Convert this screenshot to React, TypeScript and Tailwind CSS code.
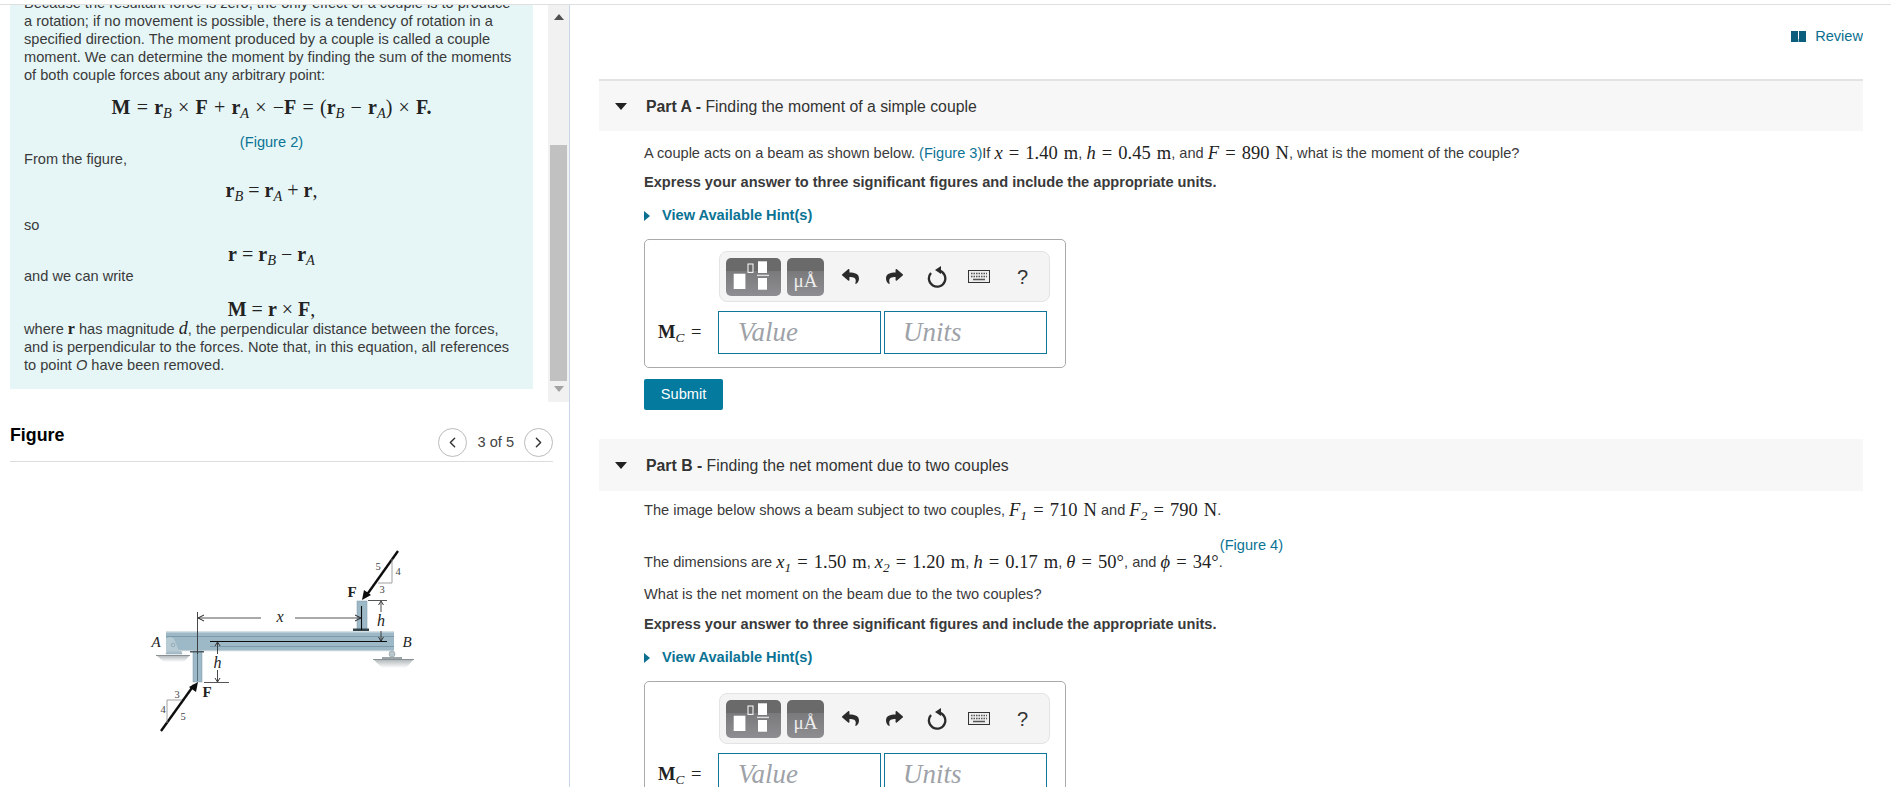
import React from 'react';
import { ChevronLeft, ChevronRight } from 'lucide-react';
import { FaReply, FaShare } from 'react-icons/fa';

const Eq: React.FC<{ className?: string; children: React.ReactNode }> = ({ className = '', children }) => (
  <span className={`font-['Liberation_Serif',serif] text-[#222] whitespace-nowrap ${className}`}>{children}</span>
);

const B: React.FC<{ children: React.ReactNode }> = ({ children }) => <b className="font-bold">{children}</b>;

const Sub: React.FC<{ children: React.ReactNode }> = ({ children }) => (
  <sub className="static text-[0.72em] italic align-[-0.28em] leading-none">{children}</sub>
);

const I: React.FC<{ children: React.ReactNode }> = ({ children }) => <i className="italic">{children}</i>;

// inline math in the question text
const Inline: React.FC<{ children: React.ReactNode }> = ({ children }) => (
  <Eq className="text-[18.5px] [word-spacing:1.5px]">{children}</Eq>
);

const Triangle: React.FC<{ open?: boolean; className?: string }> = ({ open, className = '' }) =>
  open ? (
    <svg width="12" height="7" viewBox="0 0 12 7" className={className}>
      <path d="M0 0h12L6 7z" fill="#222" />
    </svg>
  ) : (
    <svg width="6" height="10" viewBox="0 0 6 10" className={className}>
      <path d="M0 0l6 5-6 5z" fill="#0b6f8f" />
    </svg>
  );

const Toolbar: React.FC = () => (
  <div className="ml-[74px] w-[331px] h-[51px] bg-[#f4f4f4] border border-[#e3e3e3] rounded-lg flex items-center pl-[6px] text-[#2b2b2b]">
    <div className="w-[55px] h-[38px] rounded-[5px] bg-[linear-gradient(#6a6a6a_0,#6a6a6a_35%,#7a7a7c_35%,#8e8e92_100%)]">
      <svg width="55" height="38" viewBox="0 0 55 38">
        <g fill="#fff">
          <rect x="7.7" y="15.7" width="11.7" height="15.3" />
          <rect x="32" y="3.3" width="9" height="11.7" />
          <rect x="31" y="16.7" width="12" height="1.4" fill="#ddd" />
          <rect x="32" y="20" width="9" height="11.7" />
        </g>
        <rect x="22" y="6" width="5" height="8.4" fill="none" stroke="#fff" />
      </svg>
    </div>
    <div className="ml-[6px] w-[37px] h-[38px] rounded-[5px] bg-[linear-gradient(#6a6a6a_0,#6a6a6a_35%,#7a7a7c_35%,#8e8e92_100%)] flex items-end justify-center pb-[5px] font-['Liberation_Serif',serif] text-[19px] leading-[20px] text-[#eee]">
      μÅ
    </div>
    <FaReply className="ml-[18px] w-[17px] h-[17px]" />
    <FaShare className="ml-[27px] w-[17px] h-[17px]" />
    <svg width="22" height="22" viewBox="0 0 22 22" className="ml-[23px]">
      <path d="M5 7A8.2 8.2 0 1 0 12.5 4.4" fill="none" stroke="#2b2b2b" strokeWidth="2.3" />
      <path d="M9 4l6-4v8z" fill="#2b2b2b" />
    </svg>
    <svg width="22" height="13" viewBox="0 0 22 13" className="ml-[20px]">
      <rect x="0.5" y="0.5" width="21" height="12" fill="#eee" stroke="#333" />
      <path d="M3 3.5h16M3 6.5h16" stroke="#555" strokeWidth="1.5" strokeDasharray="1.5 1" />
      <path d="M5 9.5h12" stroke="#555" strokeWidth="1.5" />
    </svg>
    <span className="ml-[27px] font-['Liberation_Sans',sans-serif] text-[20px] text-[#333]">?</span>
  </div>
);

const AnswerBox: React.FC = () => (
  <div className="mt-[13px] ml-[45px] w-[422px] h-[129px] border border-[#aaa] rounded-[5px] pt-[11px] shrink-0">
    <Toolbar />
    <div className="mt-[9px] flex items-center h-[43px]">
      <Eq className="ml-[13px] w-[60px] text-[18.5px] [word-spacing:2px]">
        <B>M</B>
        <Sub>C</Sub> =
      </Eq>
      <input
        readOnly
        placeholder="Value"
        className="w-[163px] h-[43px] border border-[#12769a] pl-[19px] font-['Liberation_Serif',serif] italic text-[27px] placeholder:text-[#9ea2a8] outline-none"
      />
      <input
        readOnly
        placeholder="Units"
        className="ml-[3px] w-[163px] h-[43px] border border-[#12769a] pl-[18px] font-['Liberation_Serif',serif] italic text-[27px] placeholder:text-[#9ea2a8] outline-none"
      />
    </div>
  </div>
);

const PartHeader: React.FC<{ part: string; title: string; className?: string }> = ({ part, title, className = '' }) => (
  <div className={`flex items-center bg-[#f7f7f7] shrink-0 ${className}`}>
    <Triangle open className="ml-[16px]" />
    <div className="ml-[19px] pt-[2px] text-[15.8px] text-[#333]">
      <span className="font-bold">Part {part} - </span>
      {title}
    </div>
  </div>
);

const Hint: React.FC<{ className?: string }> = ({ className = '' }) => (
  <div className={`ml-[45px] flex items-center h-[20px] font-bold text-[#0b7394] ${className}`}>
    <Triangle />
    <span className="ml-[12px]">View Available Hint(s)</span>
  </div>
);

// the beam drawing from the figure panel
const BeamFigure: React.FC = () => (
  <svg width="320" height="200" viewBox="0 0 320 200" className="ml-[120px] mt-[78px] shrink-0">
    <defs>
      <filter id="soft">
        <feGaussianBlur stdDeviation="0.4" />
      </filter>
      <linearGradient id="shade" x1="0" y1="0" x2="0" y2="1">
        <stop offset="0" stopColor="#aab2b4" />
        <stop offset="1" stopColor="#fff" />
      </linearGradient>
    </defs>
    <g filter="url(#soft)">
      <path d="M36 115h34l-6 7H44z" fill="url(#shade)" />
      <path d="M253 119h41l-8 9h-24z" fill="url(#shade)" />
      <path d="M46 114l4-12q0-3 3-3h2q3 0 3 3l4 12z" fill="#a9c0cb" stroke="#8ba3af" strokeWidth="0.5" />
      <rect x="46" y="91" width="228" height="20" fill="#9db8c6" />
      <rect x="46" y="91" width="228" height="1.5" fill="#d5e0e5" />
      <rect x="46" y="96" width="228" height="1" fill="#7d98a6" />
      <rect x="90" y="106" width="184" height="1" fill="#7d98a6" />
      <rect x="46" y="110" width="228" height="1.2" fill="#c3d0d6" />
      <path d="M46 99q4-4 8 0l5 12H46z" fill="#b7cbd4" />
      <circle cx="53" cy="105" r="1.8" fill="none" stroke="#7d98a6" strokeWidth="0.6" />
      <circle cx="272" cy="114" r="3" fill="#b9c6cc" stroke="#7f8f97" strokeWidth="0.5" />
      <rect x="262" y="117" width="20" height="2" fill="#9aa5aa" />
      <path d="M253 119.5h41M36 115.5h34" stroke="#7e8689" strokeWidth="0.8" />

      <rect x="237" y="61" width="10" height="29" fill="#9db8c6" stroke="#7d98a6" strokeWidth="0.5" />
      <rect x="233" y="88.5" width="16" height="2.5" fill="#33424a" />
      <rect x="73" y="111" width="9" height="31" fill="#9db8c6" stroke="#7d98a6" strokeWidth="0.5" />
      <rect x="70" y="111" width="14" height="1.5" fill="#4a5a62" />
      <path d="M77.5 113v28" stroke="#56707d" strokeWidth="1" />

      <path d="M241.5 66v24" stroke="#111" strokeWidth="1.1" />
      <path d="M77.5 72v42" stroke="#333" strokeWidth="0.9" />
      <path d="M90 101.5h177" stroke="#111" strokeWidth="1.1" />
      <path d="M248 60.5h19M84 142.5h25" stroke="#555" strokeWidth="1" />

      <path d="M79 78h62M175 78h65" stroke="#555" strokeWidth="1" />
      <path d="M84 75l-6 3 6 3M235 75l6 3-6 3" fill="none" stroke="#222" strokeWidth="1" />
      <path d="M261 62v10M261 91v10M97.5 103v11M97.5 130v11" stroke="#333" strokeWidth="0.9" />
      <path d="M258.5 65l2.5-4 2.5 4M258.5 97l2.5 4 2.5-4M95 106l2.5-4 2.5 4M95 138l2.5 4 2.5-4" fill="none" stroke="#222" strokeWidth="0.9" />

      <path d="M278 11L246 56" stroke="#111" strokeWidth="2.4" />
      <path d="M242 60l2-10 7 5z" fill="#111" />
      <path d="M41 191l33-46" stroke="#111" strokeWidth="2.4" />
      <path d="M78 142l-2 10-7-5z" fill="#111" />
      <path d="M272 19v24h-14" fill="none" stroke="#888" strokeWidth="0.8" />
      <path d="M47 183v-23h15" fill="none" stroke="#888" strokeWidth="0.8" />
    </g>
    <g fontFamily="'Liberation Serif', serif" fill="#222" textAnchor="middle">
      <text x="232" y="57" fontSize="15" fontWeight="bold">F</text>
      <text x="87" y="157" fontSize="15" fontWeight="bold">F</text>
      <text x="36" y="107" fontSize="15" fontStyle="italic">A</text>
      <text x="287" y="107" fontSize="15" fontStyle="italic">B</text>
      <text x="160" y="82" fontSize="16" fontStyle="italic">x</text>
      <text x="261" y="86" fontSize="16" fontStyle="italic">h</text>
      <text x="97.5" y="128" fontSize="16" fontStyle="italic">h</text>
      <g fontSize="10.5" fill="#444">
        <text x="258" y="30">5</text>
        <text x="278" y="35">4</text>
        <text x="262" y="53">3</text>
        <text x="57" y="158">3</text>
        <text x="43" y="173">4</text>
        <text x="63" y="180">5</text>
      </g>
    </g>
  </svg>
);

const LeftPane: React.FC = () => (
  <div className="w-[570px] shrink-0 border-r border-[#c9d6e6] flex flex-col">
    <div className="h-[397px] flex shrink-0">
      <div className="ml-[10px] w-[523px] h-[384px] bg-[#e6f6f7] overflow-hidden shrink-0 text-[14.6px] leading-[18px] text-[#3a3a3a] px-[14px]">
        <div className="-mt-[11px]">
          <p>
            Because the resultant force is zero, the only effect of a couple is to produce a rotation; if no movement
            is possible, there is a tendency of rotation in a specified direction. The moment produced by a couple is
            called a couple moment. We can determine the moment by finding the sum of the moments of both couple forces
            about any arbitrary point:
          </p>
          <div className="h-[48px] pt-[3px] flex items-center justify-center">
            <Eq className="text-[20px] [word-spacing:1.2px]">
              <B>M</B> = <B>r</B>
              <Sub>B</Sub> × <B>F</B> + <B>r</B>
              <Sub>A</Sub> × −<B>F</B> = (<B>r</B>
              <Sub>B</Sub> − <B>r</B>
              <Sub>A</Sub>) × <B>F.</B>
            </Eq>
          </div>
          <div className="mt-px -mb-px text-center text-[#0b7394]">(Figure 2)</div>
          <p>From the figure,</p>
          <div className="h-[48px] flex items-center justify-center">
            <Eq className="text-[20px]">
              <B>r</B>
              <Sub>B</Sub> = <B>r</B>
              <Sub>A</Sub> + <B>r</B>,
            </Eq>
          </div>
          <p>so</p>
          <div className="h-[33px] flex items-end justify-center">
            <Eq className="text-[20px] leading-[18px]">
              <B>r</B> = <B>r</B>
              <Sub>B</Sub> − <B>r</B>
              <Sub>A</Sub>
            </Eq>
          </div>
          <p>and we can write</p>
          <div className="h-[34px] flex items-end justify-center">
            <Eq className="text-[20px] leading-[20px]">
              <B>M</B> = <B>r</B> × <B>F</B>,
            </Eq>
          </div>
          <p>
            where <Eq className="text-[16px]"><B>r</B></Eq> has magnitude <Eq className="text-[18px]"><I>d</I></Eq>, the
            perpendicular distance between the forces, and is perpendicular to the forces. Note that, in this equation,
            all references to point <i>O</i> have been removed.
          </p>
        </div>
      </div>
      <div className="ml-[15px] w-[21px] bg-[#f1f1f1] flex flex-col items-center">
        <svg width="10" height="6" viewBox="0 0 10 6" className="mt-[9px]">
          <path d="M0 6l5-6 5 6z" fill="#505050" />
        </svg>
        <div className="mt-[125px] w-[17px] h-[236px] bg-[#c1c1c1]" />
        <svg width="10" height="6" viewBox="0 0 10 6" className="mt-[5px]">
          <path d="M0 0l5 6 5-6z" fill="#a3a3a3" />
        </svg>
      </div>
    </div>
    <div className="ml-[10px] w-[543px] h-[60px] border-b border-[#ddd] flex items-start shrink-0">
      <div className="mt-[23px] text-[17.8px] font-bold text-black leading-[20px]">Figure</div>
      <div className="ml-auto mt-[26px] flex items-center text-[14.6px] text-[#444]">
        <span className="w-[29px] h-[29px] rounded-full border border-[#bbb] flex items-center justify-center">
          <ChevronLeft className="w-[17px] h-[17px] text-[#333]" />
        </span>
        <span className="mx-[10px]">3 of 5</span>
        <span className="w-[29px] h-[29px] rounded-full border border-[#bbb] flex items-center justify-center">
          <ChevronRight className="w-[17px] h-[17px] text-[#333]" />
        </span>
      </div>
    </div>
    <BeamFigure />
  </div>
);

const RightPane: React.FC = () => (
  <div className="ml-[29px] w-[1264px] flex flex-col text-[14.6px] text-[#3a3a3a] overflow-hidden">
    <div className="h-[76px] shrink-0 border-b-2 border-[#e3e3e3] flex items-start justify-end">
      <div className="mt-[21px] flex items-center text-[#0b6f8f] leading-[20px]">
        <svg width="15" height="11" viewBox="0 0 15 11" className="mr-[9px]">
          <path d="M0 0h7v11H0zM8 0h7v11H8z" fill="#0b5f7c" />
          <path d="M7 8h1v3H7z" fill="#8fb4c3" />
        </svg>
        Review
      </div>
    </div>

    <PartHeader part="A" title="Finding the moment of a simple couple" className="h-[50px]" />
    <div className="mt-[13px] ml-[45px] h-[20px] flex items-center whitespace-pre">
      A couple acts on a beam as shown below. <span className="text-[#0b7394]">(Figure 3)</span>If{' '}
      <Inline>
        <I>x</I> = 1.40 m
      </Inline>
      ,{' '}
      <Inline>
        <I>h</I> = 0.45 m
      </Inline>
      , and{' '}
      <Inline>
        <I>F</I> = 890 N
      </Inline>
      , what is the moment of the couple?
    </div>
    <div className="mt-[8px] ml-[45px] h-[20px] font-bold">
      Express your answer to three significant figures and include the appropriate units.
    </div>
    <Hint className="mt-[14px]" />
    <AnswerBox />
    <button className="mt-[11px] ml-[45px] w-[79px] h-[31px] shrink-0 bg-[#047a9f] rounded-[2px] text-white">
      Submit
    </button>

    <PartHeader part="B" title="Finding the net moment due to two couples" className="h-[52px] mt-[29px]" />
    <div className="mt-[10px] ml-[45px] h-[20px] flex items-center whitespace-pre shrink-0">
      The image below shows a beam subject to two couples,{' '}
      <Inline>
        <I>F</I>
        <Sub>1</Sub> = 710 N
      </Inline>
      <span className="ml-[4px]">and </span>
      <Inline>
        <I>F</I>
        <Sub>2</Sub> = 790 N
      </Inline>
      .
    </div>
    <div className="mt-[14px] ml-[45px] h-[38px] flex shrink-0 whitespace-pre">
      <div className="self-end h-[20px] flex items-center">
        The dimensions are{' '}
        <Inline>
          <I>x</I>
          <Sub>1</Sub> = 1.50 m
        </Inline>
        ,{' '}
        <Inline>
          <I>x</I>
          <Sub>2</Sub> = 1.20 m
        </Inline>
        ,{' '}
        <Inline>
          <I>h</I> = 0.17 m
        </Inline>
        ,{' '}
        <Inline>
          <I>θ</I> = 50°
        </Inline>
        , and{' '}
        <Inline>
          <I>ϕ</I> = 34°
        </Inline>
        .
      </div>
      <span className="-ml-[3px] self-start text-[#0b7394] leading-[20px]">(Figure 4)</span>
    </div>
    <div className="mt-[11px] ml-[45px] h-[20px] shrink-0">What is the net moment on the beam due to the two couples?</div>
    <div className="mt-[10px] ml-[45px] h-[20px] font-bold shrink-0">
      Express your answer to three significant figures and include the appropriate units.
    </div>
    <Hint className="mt-[14px] shrink-0" />
    <AnswerBox />
  </div>
);

export default function App() {
  return (
    <div className="w-[1891px] h-[787px] bg-white overflow-hidden pt-[4px] font-['Liberation_Sans',Arial,sans-serif]">
      <div className="h-[783px] border-t border-[#e0e0e0] flex">
        <LeftPane />
        <RightPane />
      </div>
    </div>
  );
}
